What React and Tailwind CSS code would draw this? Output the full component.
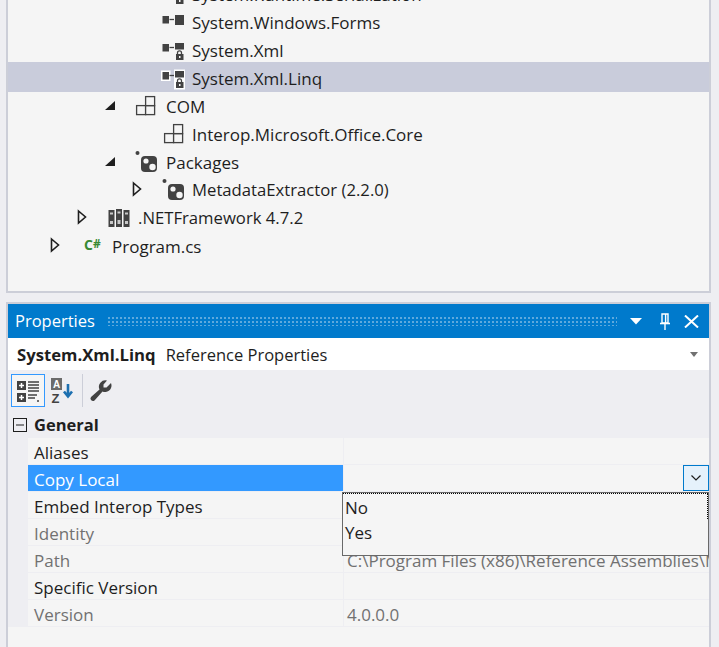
const F = { fontFamily: '"Open Sans", "Noto Sans", sans-serif' };

function Open() {
  return <svg width="14" height="14" viewBox="0 0 14 14" className="block"><path d="M11 2 V11 H1 Z" fill="#1e1e1e" /></svg>;
}
function Closed() {
  return <svg width="10" height="16" viewBox="0 0 10 16" className="block mb-[3px]"><path d="M1.5 2 L8.5 8 L1.5 14 Z" fill="#f5f5f5" stroke="#1e1e1e" strokeWidth="1.6" /></svg>;
}
function Ref({ lock, sel }) {
  const bg = sel ? "#c9ccdb" : "#f5f5f5";
  return (
    <svg width="24" height="24" viewBox="0 0 24 24" className="block">
      {sel && <rect x="0" y="4.5" width="9.5" height="10.5" fill="#fff" />}
      {sel && <rect x="13" y="3.5" width="11" height="20" fill="#fff" />}
      <rect x="1.5" y="6" width="6.5" height="7.5" fill="#424242" />
      <path d="M8.5 9.5 H13" stroke="#424242" strokeWidth="1.3" />
      <rect x="14" y="5" width="9" height="10" fill="#424242" />
      {lock && (
        <g>
          <rect x="14" y="11.5" width="9.5" height="11.5" fill={sel ? "#fff" : bg} />
          <path d="M16.5 16.5 V14.8 a2 2 0 0 1 4 0 V16.5" fill="none" stroke="#424242" strokeWidth="1.3" />
          <rect x="15" y="16" width="7.5" height="6" fill="#424242" />
          <rect x="18" y="18" width="1.5" height="2" fill="#f5f5f5" />
        </g>
      )}
    </svg>
  );
}
function Com({ shift }) {
  return (
    <svg width="22" height="22" viewBox="0 0 22 22" className={shift ? "block ml-[1px]" : "block"} fill="none" stroke="#424242" strokeWidth="1.3">
      <rect x="1.6" y="10.6" width="9" height="9" fill="#f5f5f5" />
      <rect x="10.6" y="10.6" width="9" height="9" fill="#f5f5f5" />
      <rect x="10.6" y="1.6" width="9" height="9" fill="#f5f5f5" />
    </svg>
  );
}
function Pkg() {
  return (
    <svg width="24" height="24" viewBox="0 0 24 24" className="block">
      <circle cx="3.5" cy="3" r="2" fill="#424242" />
      <rect x="7" y="6" width="16" height="16" rx="4" fill="#424242" />
      <circle cx="12" cy="11" r="2.6" fill="#f5f5f5" />
      <circle cx="18.5" cy="17" r="3.2" fill="#f5f5f5" />
    </svg>
  );
}
function Books() {
  return (
    <svg width="22" height="18" viewBox="0 0 22 18" className="block mb-[1px]">
      <rect x="0.5" y="1" width="6" height="17" fill="#424242" />
      <rect x="8" y="0" width="6" height="18" fill="#424242" />
      <rect x="15.5" y="1" width="6" height="17" fill="#424242" />
      <rect x="2" y="3.5" width="3" height="2" fill="#c8c8c8" /><rect x="2" y="12" width="3" height="3" fill="#c8c8c8" />
      <rect x="9.5" y="2.5" width="3" height="2" fill="#c8c8c8" /><rect x="9.5" y="11" width="3" height="4" fill="#c8c8c8" />
      <rect x="17" y="3.5" width="3" height="2" fill="#c8c8c8" /><rect x="17" y="12" width="3" height="3" fill="#c8c8c8" />
    </svg>
  );
}

function TreeRow({ row, arrowCls, iconCls, arrow, icon, text, sel, textCls = "" }) {
  return (
    <div className={(sel ? "flex items-center h-[30px] -mt-[2px] pt-[2px] bg-[#c9ccdb] " : "flex items-center h-[28px] ") + row}>
      <div className={"shrink-0 flex items-center " + arrowCls}>{arrow}</div>
      <div className={"shrink-0 flex items-center " + iconCls}>{icon}</div>
      <span className={"text-[#1e1e1e] whitespace-nowrap pt-[1px] " + textCls}>{text}</span>
    </div>
  );
}

const props = [
  ["Aliases", false, ""],
  ["Copy Local", false, "", true],
  ["Embed Interop Types", false, ""],
  ["Identity", true, ""],
  ["Path", true, "C:\\Program Files (x86)\\Reference Assemblies\\Microsoft"],
  ["Specific Version", false, ""],
  ["Version", true, "4.0.0.0"],
];

function PropRow({ name, gray, value, sel }) {
  return (
    <div className="flex h-[27px] border-b border-[#eeeef2]">
      <div className={"w-[315px] shrink-0 pl-[6px] pt-[2px] flex items-center " + (sel ? "bg-[#3399ff] text-white" : gray ? "text-[#717171]" : "text-[#1e1e1e]")}>{name}</div>
      <div className="flex-1 min-w-0 pl-[3px] pt-[2px] flex items-center border-l border-[#eeeef2] relative overflow-hidden">
        <span className={"whitespace-nowrap " + (gray ? "text-[#717171]" : "")}>{value}</span>
        {sel && (
          <div className="absolute right-0 top-0 w-[26px] h-[26px] border border-[#007acc] bg-[#e5f1fb] flex items-center justify-center">
            <svg width="12" height="8" viewBox="0 0 12 8"><path d="M1.5 1.5 L6 6 L10.5 1.5" fill="none" stroke="#1e1e1e" strokeWidth="1.2" /></svg>
          </div>
        )}
      </div>
    </div>
  );
}

export default function App() {
  return (
    <div className="w-[719px] h-[647px] bg-[#eeeef2] overflow-hidden flex flex-col pl-[6px] pr-[8px] text-[17px] leading-none" style={F}>
      <div className="h-[293px] shrink-0 bg-[#f5f5f5] border-x-2 border-b-2 border-[#ccced8] overflow-hidden">
        <div className="-mt-[20px]">
          <TreeRow row="pl-[153px]" iconCls="w-[31px]" icon={<Ref lock />} text="System.Runtime.Serialization" />
          <TreeRow row="pl-[153px]" iconCls="w-[31px]" icon={<Ref />} text="System.Windows.Forms" />
          <TreeRow row="pl-[153px]" iconCls="w-[31px]" icon={<Ref lock />} text="System.Xml" />
          <TreeRow row="pl-[153px]" iconCls="w-[31px]" icon={<Ref lock sel />} text="System.Xml.Linq" sel />
          <TreeRow row="pl-[96px]" arrowCls="w-[30px]" iconCls="w-[32px]" arrow={<Open />} icon={<Com shift />} text="COM" />
          <TreeRow row="pl-[155px]" iconCls="w-[29px]" icon={<Com />} text="Interop.Microsoft.Office.Core" />
          <TreeRow row="pl-[96px]" arrowCls="w-[30px]" iconCls="w-[32px]" arrow={<Open />} icon={<Pkg />} text="Packages" />
          <TreeRow row="pl-[124px]" arrowCls="w-[29px]" iconCls="w-[31px]" arrow={<Closed />} icon={<Pkg />} text="MetadataExtractor (2.2.0)" textCls="text-[16.7px]" />
          <TreeRow row="pl-[69px]" arrowCls="w-[31px]" iconCls="w-[30px]" arrow={<Closed />} icon={<Books />} text=".NETFramework 4.7.2" textCls="text-[16.7px]" />
          <TreeRow
            row="pl-[42px]"
            arrowCls="w-[34px]"
            iconCls="w-[28px]"
            arrow={<Closed />}
            icon={<span className="text-[#388a34] font-bold text-[14px] mb-[3px]">C<span className="text-[12px] align-[2px]">#</span></span>}
            text="Program.cs"
          />
        </div>
      </div>
      <div className="flex-1 mt-[9px] border-x-2 border-t-2 border-[#ccced8] flex flex-col relative bg-[#f5f5f5]">
        <div className="h-[34px] bg-[#007acc] flex items-center pl-[7px] pr-[10px] text-white shrink-0 text-[16.5px]">
          <span>Properties</span>
          <div className="flex-1 h-[10px] ml-[12px] mr-[13px] bg-[radial-gradient(#5ea9dd_1px,transparent_1px)] bg-[length:4px_4px]"></div>
          <svg width="12" height="7" viewBox="0 0 12 7" className="mr-[17px]"><path d="M0 0 H12 L6 6.5 Z" fill="#fff" /></svg>
          <svg width="12" height="17" viewBox="0 0 12 17" className="mr-[13px]" fill="none" stroke="#fff" strokeWidth="1.4"><path d="M3 1 H9 V10 H3 Z M6.6 1.5 V9.5" /><path d="M1 10.5 H11" strokeWidth="1.6" /><path d="M6 11 V17" /></svg>
          <svg width="15" height="13" viewBox="0 0 15 13" fill="none" stroke="#fff" strokeWidth="2"><path d="M1 0.5 L14 12.5 M14 0.5 L1 12.5" /></svg>
        </div>
        <div className="h-[32px] bg-white flex items-center pl-[9px] pr-[11px] pt-[2px] text-[#1e1e1e] shrink-0 text-[16.5px]">
          <span className="font-bold text-[16.7px]">System.Xml.Linq</span>
          <span className="ml-[10px] flex-1">Reference Properties</span>
          <svg width="8" height="6" viewBox="0 0 8 6"><path d="M0 0 H8 L4 5 Z" fill="#717171" /></svg>
        </div>
        <div className="h-[41px] bg-[#eeeef2] flex items-center pl-[3px] shrink-0">
          <div className="w-[34px] h-[33px] border border-[#3399ff] bg-[#f5f5f5] flex items-center justify-center">
            <svg width="24" height="22" viewBox="0 0 24 22" className="block">
              <rect x="1" y="1" width="9" height="9" fill="#424242" /><path d="M3 5.5 H8 M5.5 3 V8" stroke="#fff" strokeWidth="1.5" />
              <rect x="1" y="13" width="9" height="9" fill="#424242" /><path d="M3 17.5 H8 M5.5 15 V20" stroke="#fff" strokeWidth="1.5" />
              <path d="M12 2 H23 M12 5 H23 M12 8 H23 M12 11 H23 M12 15 H21 M12 18 H19 M21 21 H23" stroke="#424242" strokeWidth="1.6" />
            </svg>
          </div>
          <div className="w-[34px] flex items-center justify-center">
            <svg width="24" height="26" viewBox="0 0 24 26" className="block">
              <rect x="1" y="0" width="11" height="12" fill="#6b6b6b" />
              <text x="3" y="10" fontSize="10" fontWeight="700" fill="#fff" fontFamily="Liberation Sans">A</text>
              <text x="1.5" y="25" fontSize="13" fontWeight="700" fill="#424242" fontFamily="Liberation Sans">Z</text>
              <path d="M18 6 V18 M14 13.5 L18 18.5 L22 13.5" fill="none" stroke="#1c6fb0" strokeWidth="2.6" />
            </svg>
          </div>
          <div className="w-px h-[33px] bg-[#ccced8] mx-[3px]"></div>
          <div className="w-[30px] flex items-center justify-center">
            <svg width="24" height="24" viewBox="0 0 24 24" className="block">
              <path d="M22.5 6 a6.5 6.5 0 0 1 -9 6.5 L5.5 21.5 a2.5 2.5 0 0 1 -3.5 -3.5 L10.5 10.5 A6.5 6.5 0 0 1 18 1.5 L14.5 5.5 V8.5 H17.5 L22 4 Z" fill="#424242" />
            </svg>
          </div>
        </div>
        <div className="h-[27px] bg-[#eeeef2] flex items-center pl-[5px] pt-[1px] shrink-0">
          <svg width="14" height="14" viewBox="0 0 14 14" className="block"><rect x="0.5" y="0.5" width="13" height="13" fill="none" stroke="#1e1e1e" /><path d="M3 7 H11" stroke="#1e1e1e" /></svg>
          <span className="ml-[7px] font-bold text-[#1e1e1e] text-[16.5px]">General</span>
        </div>
        <div className="flex-1">
          <div className="border-l-[20px] border-[#eeeef2]">
            {props.map((p) => <PropRow key={p[0]} name={p[0]} gray={p[1]} value={p[2]} sel={p[3]} />)}
          </div>
        </div>
        <div className="absolute left-[334px] top-[188px] w-[367px] h-[64px] bg-[#f5f5f5] border border-[#696969] flex flex-col pl-[2px] text-[#1e1e1e]">
          <div className="h-[26px] -ml-[2px] pl-[2px] pt-[1px] flex items-center border-t border-r border-dotted border-black">No</div>
          <div className="h-[26px] flex items-center">Yes</div>
        </div>
      </div>
    </div>
  );
}
